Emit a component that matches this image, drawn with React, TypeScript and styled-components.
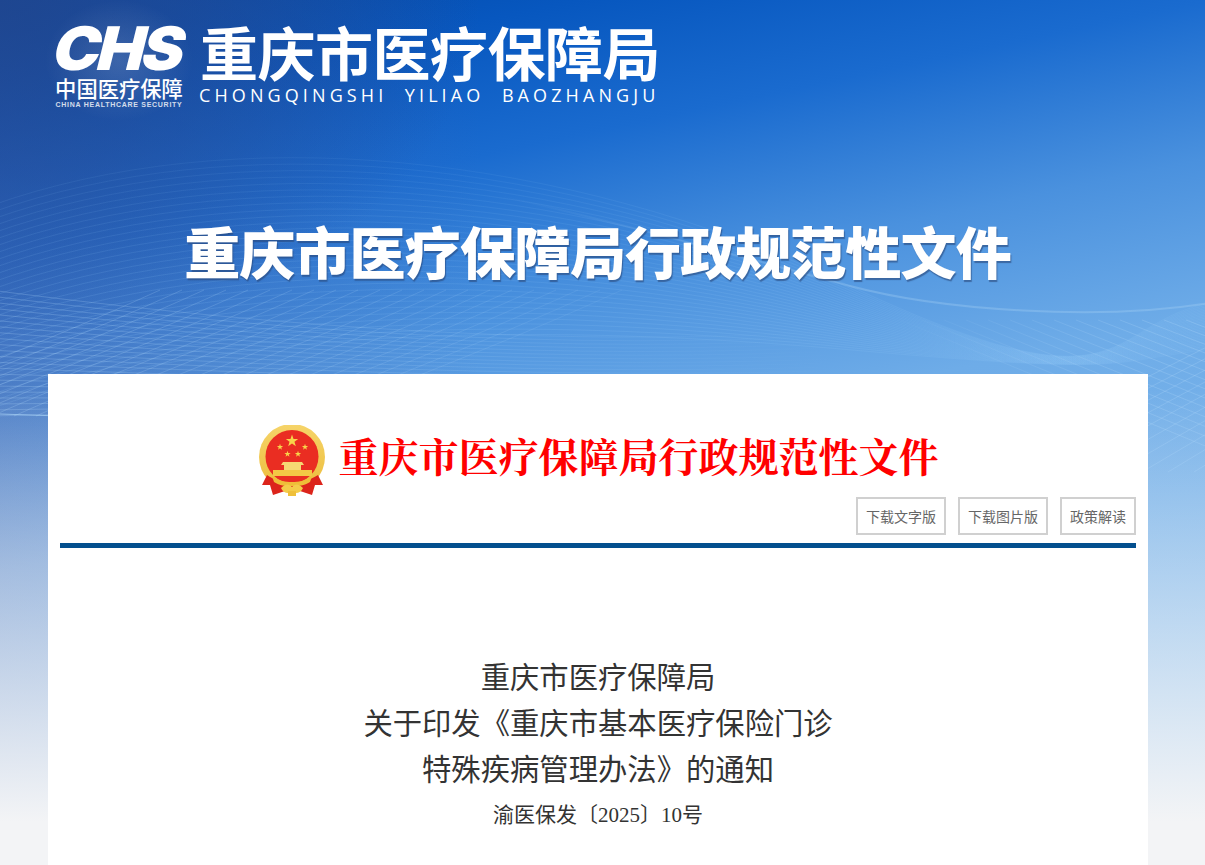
import React from "react";
import styled, { createGlobalStyle } from "styled-components";

const CJK = `"Noto Sans CJK SC", "Noto Sans", sans-serif`;

const GlobalStyle = createGlobalStyle`
  html, body {
    margin: 0;
    padding: 0;
    height: 865px;
    overflow: hidden;
    background: #f3f4f6;
  }
`;

const Page = styled.div`
  position: relative;
  height: 865px;
  overflow: hidden;
  font-family: ${CJK};
  background:
    linear-gradient(180deg, rgba(243, 244, 246, 0) 45%, #f3f4f6 95%),
    radial-gradient(ellipse 480px 340px at 0 0, rgba(30, 68, 140, 0.8), rgba(30, 68, 140, 0) 100%),
    linear-gradient(90deg, rgba(100, 96, 150, 0.3) 0, rgba(100, 96, 150, 0) 40%),
    linear-gradient(168deg, #0047a6 0, #0757bf 11%, #1a6bcf 23%, #4a91de 37%, #6eace8 51%, #8fc2ee 100%);
`;

const Mesh = styled.svg`
  position: absolute;
  left: 0;
  top: 0;
  pointer-events: none;
`;

const Header = styled.header`
  position: relative;
  display: flex;
  align-items: flex-start;
  gap: 16px;
  height: 120px;
  padding: 20px 0 0 55px;
  box-sizing: content-box;
`;

const LogoBox = styled.div`
  position: relative;
  width: 128px;
  color: #fff;
  text-align: center;

  &::before {
    content: "";
    position: absolute;
    inset: -20px -10px -12px;
    background: radial-gradient(closest-side, rgba(255, 255, 255, 0.14), rgba(255, 255, 255, 0));
  }
`;

const LogoMark = styled.div`
  position: relative;
  height: 52px;
  margin-top: 2px;
  font-family: Inter, "Liberation Sans", sans-serif;
  font-size: 60px;
  line-height: 52px;
  font-weight: 900;
  white-space: nowrap;
  letter-spacing: -3px;
  transform: skewX(-14deg) scaleX(1.06);
`;

const LogoCn = styled.div`
  position: relative;
  margin-top: 2px;
  font-size: 21.3px;
  line-height: 24px;
  font-weight: 500;
  white-space: nowrap;
`;

const LogoEn = styled.div`
  position: relative;
  font-family: "Liberation Sans", sans-serif;
  font-size: 7px;
  line-height: 9px;
  font-weight: 700;
  letter-spacing: 0.72px;
  white-space: nowrap;
  opacity: 0.8;
`;

const Brand = styled.div`
  color: #fff;
`;

const BrandCn = styled.div`
  margin-left: 1px;
  font-size: 58px;
  line-height: 62px;
  font-weight: 700;
  letter-spacing: -0.5px;
  white-space: nowrap;
`;

const BrandEn = styled.div`
  margin-top: 1px;
  font-family: "Open Sans", sans-serif;
  font-size: 18px;
  line-height: 24px;
  letter-spacing: 4.1px;
  white-space: pre;
`;

const Banner = styled.h1`
  position: relative;
  width: 1195px;
  margin: 0;
  height: 234px;
  padding-top: 77px;
  box-sizing: border-box;
  text-align: center;
  color: #fff;
  font-size: 56px;
  line-height: 66px;
  font-weight: 900;
  letter-spacing: -0.9px;
  white-space: nowrap;
  text-shadow: 1px 2px 1px rgba(40, 70, 120, 0.6);
`;

const Card = styled.main`
  position: relative;
  width: 1100px;
  height: 491px;
  margin-left: 48px;
  padding: 0 12px;
  box-sizing: border-box;
  background: #fff;
`;

const DocHead = styled.div`
  display: flex;
  justify-content: center;
  align-items: flex-start;
  gap: 11px;
  padding-top: 51px;
`;

const DocHeadTitle = styled.div`
  color: #f00;
  font-family: "Noto Serif CJK SC", ${CJK};
  font-size: 40px;
  line-height: 60px;
  font-weight: 700;
  white-space: nowrap;
`;

const Actions = styled.div`
  display: flex;
  justify-content: flex-end;
  gap: 12px;
`;

const ActionButton = styled.a`
  display: flex;
  align-items: center;
  justify-content: center;
  height: 38px;
  padding: 0 8px;
  box-sizing: border-box;
  border: 2px solid #d0d0d0;
  color: #666;
  font-size: 14px;
  white-space: nowrap;
`;

const Rule = styled.div`
  height: 5px;
  margin-top: 8px;
  background: #034f8e;
`;

const DocTitle = styled.h2`
  margin: 104px 0 0;
  text-align: center;
  color: #333;
  font-size: 29.33px;
  line-height: 46px;
  font-weight: 400;
`;

const DocNumber = styled.div`
  margin-top: 2px;
  text-align: center;
  color: #333;
  font-family: "Liberation Serif", ${CJK};
  font-size: 21px;
  line-height: 46px;
`;

function wavePaths() {
  const ribbon: string[] = [];
  for (let i = 0; i < 30; i++) {
    ribbon.push(
      `M-10 ${206 + i * 7} C 230 ${120 + i * 7}, 560 ${150 + i * 6}, 850 ${286 + i * 2.2} S 1100 ${322 + i * 1.4}, 1215 ${302 + i * 1.6}`
    );
  }
  const meshA: string[] = [];
  const meshB: string[] = [];
  for (let i = 0; i < 22; i++) {
    meshA.push(`M-10 ${290 + i * 6} C 260 ${325 + i * 4}, 560 ${350 + i * 3}, 860 ${330 + i * 4}`);
    meshB.push(`M${-140 + i * 22} 416 C ${-60 + i * 22} 380, ${40 + i * 22} 345, ${160 + i * 22} 290`);
  }
  const meshC: string[] = [];
  for (let i = 0; i < 16; i++) {
    meshC.push(`M${960 + i * 26} 472 L ${1260 + i * 20} 320`);
    meshC.push(`M${900 + i * 22} 320 L ${1215 + i * 24} 450`);
  }
  return { ribbon, meshA, meshB, meshC };
}

const star = (cx: number, cy: number, r: number) => {
  const pts: string[] = [];
  for (let i = 0; i < 10; i++) {
    const rad = i % 2 === 0 ? r : r * 0.4;
    const a = (Math.PI / 5) * i - Math.PI / 2;
    pts.push(`${(cx + rad * Math.cos(a)).toFixed(2)},${(cy + rad * Math.sin(a)).toFixed(2)}`);
  }
  return pts.join(" ");
};

const Emblem = () => (
  <svg width="70" height="72" viewBox="0 0 70 72">
    <defs>
      <linearGradient id="ring" x1="0" y1="0" x2="0" y2="1">
        <stop offset="0" stopColor="#f6d469" />
        <stop offset="1" stopColor="#ecbd3c" />
      </linearGradient>
    </defs>
    <circle cx="34" cy="32" r="33" fill="url(#ring)" />
    <circle cx="34" cy="31.5" r="26.5" fill="#ea2d22" />
    <polygon points={star(34, 16, 6.5)} fill="#f8d44a" />
    <polygon points={star(22, 22, 3.3)} fill="#f8d44a" />
    <polygon points={star(47, 22, 3.3)} fill="#f8d44a" />
    <polygon points={star(29.5, 29, 3.3)} fill="#f8d44a" />
    <polygon points={star(40, 29, 3.3)} fill="#f8d44a" />
    <path d="M25 37 H44 L46 40 H43 V45 H26 V40 H23 Z" fill="#f6d873" />
    <rect x="15" y="45" width="39" height="6" fill="#f3c845" />
    <path d="M9 50 C16 55 24 58 34 58 C44 58 52 55 60 50 L65 60 L57 60 L54 70 L42 66 H27 L15 70 L12 60 L4 60 Z" fill="#dc241b" />
    <path d="M14 51 C21 56 27 57 34 57 C41 57 47 56 54 51 L52 57 C46 61 41 61 34 61 C27 61 22 61 16 57 Z" fill="#efbe38" />
    <path d="M23 63 C28 58 31 59 34 62 C37 59 40 58 45 63 C43 68 38 69 34 67 C30 69 25 68 23 63 Z" fill="#f4cc4a" />
    <rect x="30" y="66" width="8" height="5" fill="#efc03a" />
  </svg>
);

export default function App() {
  const { ribbon, meshA, meshB, meshC } = wavePaths();
  return (
    <Page>
      <GlobalStyle />
      <Mesh width="1205" height="480" viewBox="0 0 1205 480" fill="none">
        <defs>
          <linearGradient id="fadeLeft" gradientUnits="userSpaceOnUse" x1="0" y1="0" x2="840" y2="0">
            <stop offset="0" stopColor="#b4dafa" stopOpacity="0.24" />
            <stop offset="0.55" stopColor="#b4dafa" stopOpacity="0.14" />
            <stop offset="1" stopColor="#b4dafa" stopOpacity="0" />
          </linearGradient>
          <linearGradient id="fadeRight" gradientUnits="userSpaceOnUse" x1="880" y1="0" x2="1150" y2="0">
            <stop offset="0" stopColor="#b4dafa" stopOpacity="0" />
            <stop offset="1" stopColor="#b4dafa" stopOpacity="0.24" />
          </linearGradient>
          <linearGradient id="fadeRibbon" gradientUnits="userSpaceOnUse" x1="0" y1="130" x2="0" y2="330">
            <stop offset="0" stopColor="#8cc4f5" stopOpacity="0.06" />
            <stop offset="1" stopColor="#8cc4f5" stopOpacity="0.17" />
          </linearGradient>
          <linearGradient id="fadeCrest" gradientUnits="userSpaceOnUse" x1="500" y1="0" x2="850" y2="0">
            <stop offset="0" stopColor="#a9d3f5" stopOpacity="0" />
            <stop offset="1" stopColor="#a9d3f5" stopOpacity="0.32" />
          </linearGradient>
        </defs>
        <g stroke="url(#fadeRibbon)" strokeWidth="1">
          {ribbon.map((d) => (
            <path key={d} d={d} />
          ))}
        </g>
        <path d="M500 196 C 620 222, 760 262, 850 286 S 1100 322, 1215 302" stroke="url(#fadeCrest)" strokeWidth="2" />
        <g stroke="url(#fadeLeft)" strokeWidth="1">
          {meshA.map((d) => (
            <path key={d} d={d} />
          ))}
          {meshB.map((d) => (
            <path key={d} d={d} />
          ))}
        </g>
        <g stroke="url(#fadeRight)" strokeWidth="1">
          {meshC.map((d) => (
            <path key={d} d={d} />
          ))}
        </g>
        <path d="M0 414 L60 416" stroke="#a9d3f5" strokeOpacity="0.7" />
      </Mesh>

      <Header>
        <LogoBox>
          <LogoMark>CHS</LogoMark>
          <LogoCn>中国医疗保障</LogoCn>
          <LogoEn>CHINA HEALTHCARE SECURITY</LogoEn>
        </LogoBox>
        <Brand>
          <BrandCn>重庆市医疗保障局</BrandCn>
          <BrandEn>{"CHONGQINGSHI  YILIAO  BAOZHANGJU"}</BrandEn>
        </Brand>
      </Header>

      <Banner>重庆市医疗保障局行政规范性文件</Banner>

      <Card>
        <DocHead>
          <Emblem />
          <DocHeadTitle>重庆市医疗保障局行政规范性文件</DocHeadTitle>
        </DocHead>
        <Actions>
          <ActionButton>下载文字版</ActionButton>
          <ActionButton>下载图片版</ActionButton>
          <ActionButton>政策解读</ActionButton>
        </Actions>
        <Rule />
        <DocTitle>
          重庆市医疗保障局
          <br />
          关于印发《重庆市基本医疗保险门诊
          <br />
          特殊疾病管理办法》的通知
        </DocTitle>
        <DocNumber>渝医保发〔2025〕10号</DocNumber>
      </Card>
    </Page>
  );
}
